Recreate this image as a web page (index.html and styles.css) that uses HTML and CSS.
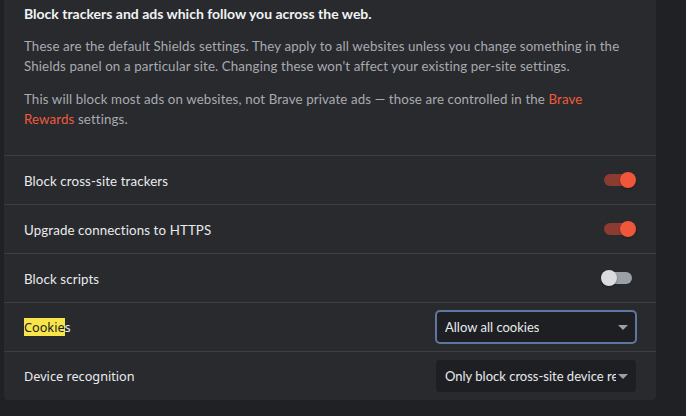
FILE: index.html
```html
<!DOCTYPE html>
<html>
<head>
<meta charset="utf-8">
<link rel="stylesheet" href="styles.css">
</head>
<body>
<div class="card">
  <div class="intro">
    <h2 class="title">Block trackers and ads which follow you across the web.</h2>
    <p class="desc">These are the default Shields settings. They apply to all websites unless you change something in the Shields panel on a particular site. Changing these won't affect your existing per-site settings.</p>
    <p class="desc second">This will block most ads on websites, not Brave private ads — those are controlled in the <a class="link">Brave Rewards</a> settings.</p>
  </div>
  <div class="row">
    <span class="label">Block cross-site trackers</span>
    <span class="toggle on"><span class="knob"></span></span>
  </div>
  <div class="row">
    <span class="label">Upgrade connections to HTTPS</span>
    <span class="toggle on"><span class="knob"></span></span>
  </div>
  <div class="row">
    <span class="label">Block scripts</span>
    <span class="toggle off"><span class="knob"></span></span>
  </div>
  <div class="row">
    <span class="label alt"><mark class="hl">Cookie</mark>s</span>
    <div class="select focused"><span class="sel-text">Allow all cookies</span><span class="arrow"></span></div>
  </div>
  <div class="row">
    <span class="label alt">Device recognition</span>
    <div class="select"><span class="sel-text">Only block cross-site device recognition</span><span class="arrow"></span></div>
  </div>
</div>
</body>
</html>
```
FILE: styles.css
```css
html, body {
  margin: 0;
  padding: 0;
  background: #202124;
  font-family: Lato, "Noto Sans", sans-serif;
  -webkit-font-smoothing: antialiased;
}
.card {
  margin-left: 4px;
  width: 652px;
  background: #292a2e;
  border-radius: 0 0 4px 4px;
  box-sizing: border-box;
}
.intro {
  padding: 4px 20px 26px 20px;
}
.title {
  margin: 0;
  font-size: 14px;
  line-height: 20px;
  font-weight: 700;
  color: #f1f3f4;
}
.desc {
  margin: 12px 0 0 0;
  font-size: 13.3px;
  line-height: 20px;
  color: #a8aab0;
  letter-spacing: 0.12px;
}
.desc.second {
  margin-top: 13px;
}
.link {
  color: #ef5a3c;
}
.row {
  height: 48px;
  border-top: 1px solid #3d3e42;
  display: flex;
  align-items: center;
  justify-content: space-between;
  padding: 0 20px;
}
.label {
  font-size: 13.3px;
  color: #e8eaed;
  letter-spacing: 0.12px;
  padding-top: 2px;
}
.label.alt {
  font-family: "Noto Sans", "Open Sans", sans-serif;
  font-size: 12.7px;
  letter-spacing: 0;
  padding-top: 0;
}
.hl {
  background: #f9e54a;
  color: #202124;
  padding: 0;
}
.toggle {
  position: relative;
  width: 28px;
  height: 12px;
  border-radius: 6px;
  margin-right: 4px;
}
.toggle.on { background: #8c3b31; }
.toggle.off { background: #9aa0a6; }
.knob {
  position: absolute;
  top: -2px;
  width: 16px;
  height: 16px;
  border-radius: 50%;
  box-shadow: 0 1px 2px rgba(0,0,0,0.35);
}
.toggle.on .knob { right: -4px; background: #f0563a; }
.toggle.off .knob { left: -3px; background: #dadce0; }
.select {
  position: relative;
  width: 200px;
  height: 32px;
  box-sizing: border-box;
  background: #1e1f22;
  border-radius: 4px;
  display: flex;
  align-items: center;
  padding: 0 20px 0 9px;
  overflow: hidden;
  white-space: nowrap;
}
.select.focused {
  width: 202px;
  height: 34px;
  border: 2px solid #5f77a0;
  padding-left: 8px;
  margin-right: -1px;
  border-radius: 5px;
}
.sel-text {
  font-size: 13px;
  color: #e8eaed;
  overflow: hidden;
}
.arrow {
  position: absolute;
  right: 8px;
  top: 50%;
  margin-top: -2px;
  width: 0;
  height: 0;
  border-left: 5px solid transparent;
  border-right: 5px solid transparent;
  border-top: 5px solid #9aa0a6;
}
.select.focused .arrow { right: 7px; }
```
